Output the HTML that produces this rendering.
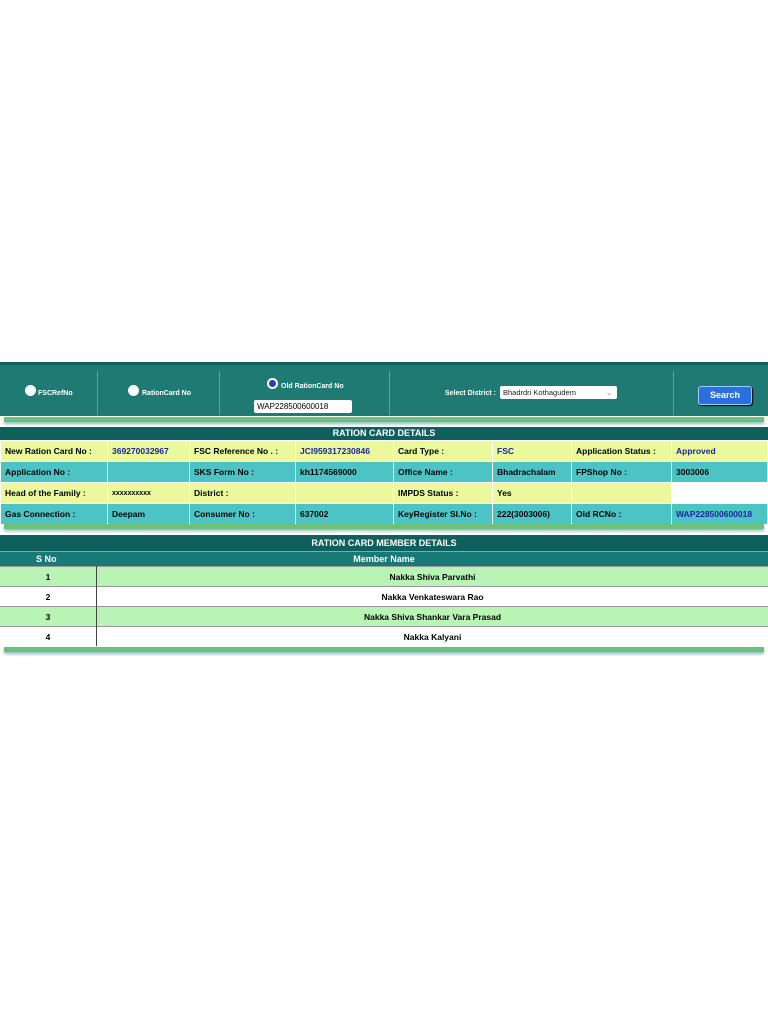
<!DOCTYPE html>
<html><head><style>
body{margin:0;width:768px;height:1024px;background:#fff;position:relative;font-family:"Liberation Sans",sans-serif;font-weight:bold;overflow:hidden}
.a{position:absolute}
.top{left:0;top:362px;width:768px;height:54px;background:#1e7a72;border-top:3px solid #0f5e58;box-sizing:border-box}
.vl{position:absolute;top:6px;width:1px;height:44px;background:#5aa69e}
.lbl{position:absolute;color:#fff;font-size:7px}
.rad{position:absolute;width:11px;height:11px;border-radius:50%;background:#fff}
.shadow{position:absolute;left:4px;width:760px;height:5px;background:#6cc07a;box-shadow:0 2px 3px #8bb}
.hd{background:#0f5f5d;color:#fff;font-size:9px;text-align:center}
table{border-collapse:collapse;position:absolute;left:0;width:768px;font-size:8.5px}
td{padding:0 0 0 4px;height:20px;border:1px solid #fff;white-space:nowrap}
.y td{background:#ecf89c}
.c td{background:#4cc4c6}
.b{color:#1a24a0}
.m td{text-align:center;border:none;border-top:1px solid #999;height:19px;font-size:8.5px;padding:0}
.m td:first-child{border-right:1px solid #444;width:96px}
.g td{background:#b8f5b4}
</style></head><body>
<div class="a top">
<div class="vl" style="left:97px"></div><div class="vl" style="left:219px"></div><div class="vl" style="left:389px"></div><div class="vl" style="left:673px"></div>
<div class="rad" style="left:25px;top:20px"></div><div class="lbl" style="left:38px;top:25px">FSCRefNo</div>
<div class="rad" style="left:128px;top:20px"></div><div class="lbl" style="left:142px;top:25px">RationCard No</div>
<div class="rad" style="left:267px;top:13px;background:#fff;border:0;box-shadow:inset 0 0 0 2px #fff,inset 0 0 0 6px #2040c0"></div><div class="lbl" style="left:281px;top:18px">Old RationCard No</div>
<div class="a" style="left:254px;top:35px;width:98px;height:13px;background:#fff;border-radius:2px;font-size:8px;color:#000;font-weight:normal;line-height:13px;padding-left:3px;box-sizing:border-box">WAP228500600018</div>
<div class="lbl" style="left:445px;top:25px">Select District :</div>
<div class="a" style="left:500px;top:21px;width:117px;height:13px;background:#fff;border-radius:2px;font-size:7.5px;color:#222;font-weight:normal;line-height:13px;padding-left:3px;box-sizing:border-box">Bhadrdri Kothagudem<span style="position:absolute;right:5px;color:#888">⌄</span></div>
<div class="a" style="left:698px;top:21px;width:52px;height:17px;background:#2a6fe0;border-radius:3px;border:1px solid #9cf;box-shadow:1px 1px 1px #000;color:#fff;font-size:9px;text-align:center;line-height:17px">Search</div>
</div>
<div class="shadow" style="top:417px"></div>
<div class="a hd" style="left:0;top:427px;width:768px;height:13px;line-height:13px">RATION CARD DETAILS</div>
<table style="top:440px">
<col style="width:107px"><col style="width:82px"><col style="width:106px"><col style="width:98px"><col style="width:99px"><col style="width:79px"><col style="width:100px"><col>
<tr class="y"><td>New Ration Card No :</td><td class="b">369270032967</td><td>FSC Reference No . :</td><td class="b">JCI959317230846</td><td>Card Type :</td><td class="b">FSC</td><td>Application Status :</td><td class="b">Approved</td></tr>
<tr class="c"><td>Application No :</td><td></td><td>SKS Form No :</td><td>kh1174569000</td><td>Office Name :</td><td>Bhadrachalam</td><td>FPShop No :</td><td>3003006</td></tr>
<tr class="y"><td>Head of the Family :</td><td style="font-size:7px">xxxxxxxxxx</td><td>District :</td><td></td><td>IMPDS Status :</td><td>Yes</td><td></td><td style="background:#fff"></td></tr>
<tr class="c"><td>Gas Connection :</td><td>Deepam</td><td>Consumer No :</td><td>637002</td><td>KeyRegister Sl.No :</td><td>222(3003006)</td><td>Old RCNo :</td><td class="b">WAP228500600018</td></tr>
</table>
<div class="shadow" style="top:524px"></div>
<div class="a hd" style="left:0;top:535px;width:768px;height:16px;line-height:16px">RATION CARD MEMBER DETAILS</div>
<div class="a hd" style="left:0;top:551px;width:768px;height:15px;line-height:15px;background:#177a76;border-top:1px solid #5bb"><span style="position:absolute;left:36px">S No</span>Member Name</div>
<table class="m" style="top:566px">
<tr class="g"><td>1</td><td>Nakka Shiva Parvathi</td></tr>
<tr><td>2</td><td>Nakka Venkateswara Rao</td></tr>
<tr class="g"><td>3</td><td>Nakka Shiva Shankar Vara Prasad</td></tr>
<tr><td>4</td><td>Nakka Kalyani</td></tr>
</table>
<div class="shadow" style="top:647px"></div>
</body></html>
